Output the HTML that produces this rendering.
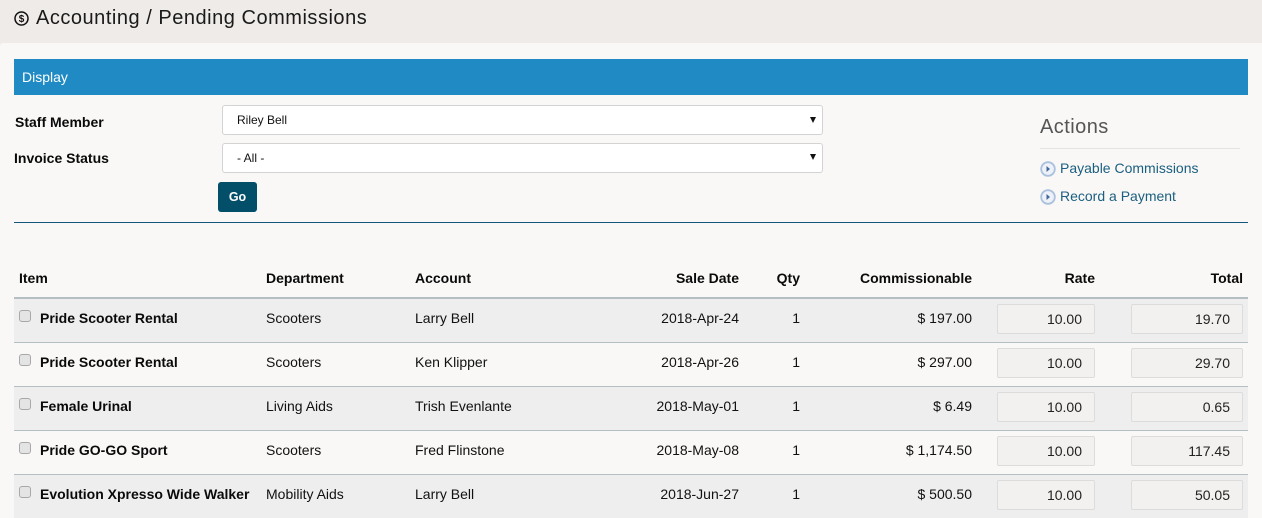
<!DOCTYPE html>
<html><head><meta charset="utf-8"><style>
html,body{margin:0;padding:0}
body{width:1262px;height:518px;overflow:hidden;position:relative;background:#eeebe8;font-family:"Liberation Sans",Arial,sans-serif;color:#111;font-size:14px}
.a,.r,.b,.l{position:absolute;white-space:nowrap;line-height:16px}
.r{text-align:right}
.b{font-weight:bold;color:#0a0a0a}
.row{position:absolute;left:14px;width:1234px;height:43px;border-bottom:1px solid #b4bfc2}
.g{background:#eeeeee}
.in{position:absolute;height:28px;border:1px solid #dcdcdc;border-radius:2px;background:#f2f1ef;text-align:right;line-height:29px;font-size:14px;color:#222;box-sizing:content-box}
.cb{position:absolute;left:19px;width:10px;height:10px;border:1px solid #a8a8a8;border-radius:3px;background:#e4e4e4}
.sel{position:absolute;left:222px;width:599px;height:28px;background:#fff;border:1px solid #d3d3d3;border-radius:3px;font-size:12px;line-height:29px;text-indent:14px}
.sel i{position:absolute;right:6px;width:0;height:0;border-left:3px solid transparent;border-right:3px solid transparent;border-top:6px solid #111}
.l{color:#1b5f80}
</style></head><body>
<div style="position:absolute;left:0;top:43px;width:1262px;height:475px;background:#f9f8f6;border-top-left-radius:3px"></div>
<svg style="position:absolute;left:14px;top:11px" width="15" height="15" viewBox="0 0 15 15"><circle cx="7.5" cy="7.5" r="6.5" fill="none" stroke="#111" stroke-width="1.5"/><text x="7.5" y="11" font-size="10" font-weight="bold" text-anchor="middle" font-family="Liberation Sans" fill="#111">$</text></svg>
<div class="a" style="left:36px;top:6px;font-size:20px;line-height:24px;letter-spacing:.52px;color:#1a1a1a">Accounting / Pending Commissions</div>

<div style="position:absolute;left:14px;top:59px;width:1234px;height:36px;background:#1f8ac3"></div>
<div class="a" style="left:22px;top:69px;color:#fff;font-size:14px">Display</div>

<div class="b" style="left:15px;top:114px">Staff Member</div>
<div class="b" style="left:14px;top:150px">Invoice Status</div>
<div class="sel" style="top:105px">Riley Bell<i style="top:11px"></i></div>
<div class="sel" style="top:143px">- All -<i style="top:10px"></i></div>
<div style="position:absolute;left:218px;top:182px;width:39px;height:30px;background:#034f6a;border-radius:3px;color:#fff;font-weight:bold;font-size:12.5px;text-align:center;line-height:30px">Go</div>

<div class="a" style="left:1040px;top:115px;font-size:20px;line-height:24px;letter-spacing:.45px;color:#555">Actions</div>
<div style="position:absolute;left:1040px;top:148px;width:200px;height:1px;background:#e6e4e2"></div>
<svg style="position:absolute;left:1040px;top:161px" width="16" height="16" viewBox="0 0 16 16"><circle cx="8" cy="8" r="6.8" fill="#eef2f8" stroke="#a9c0de" stroke-width="1.8"/><path d="M6.5 5l3.5 3-3.5 3z" fill="#41689c"/></svg>
<svg style="position:absolute;left:1040px;top:189px" width="16" height="16" viewBox="0 0 16 16"><circle cx="8" cy="8" r="6.8" fill="#eef2f8" stroke="#a9c0de" stroke-width="1.8"/><path d="M6.5 5l3.5 3-3.5 3z" fill="#41689c"/></svg>
<div class="l" style="left:1060px;top:160px">Payable Commissions</div>
<div class="l" style="left:1060px;top:188px">Record a Payment</div>
<div style="position:absolute;left:14px;top:222px;width:1234px;height:1px;background:#14587f"></div>

<div class="b" style="left:19px;top:270px">Item</div>
<div class="b" style="left:266px;top:270px">Department</div>
<div class="b" style="left:415px;top:270px">Account</div>
<div class="b r" style="right:523px;top:270px">Sale Date</div>
<div class="b r" style="right:462px;top:270px">Qty</div>
<div class="b r" style="right:290px;top:270px">Commissionable</div>
<div class="b r" style="right:167px;top:270px">Rate</div>
<div class="b r" style="right:19px;top:270px">Total</div>
<div style="position:absolute;left:14px;top:297px;width:1234px;height:2px;background:#b4bfc2"></div>

<div class="row g" style="top:299px"></div>
<div class="row" style="top:343px"></div>
<div class="row g" style="top:387px"></div>
<div class="row" style="top:431px"></div>
<div class="row g" style="top:475px;border:0"></div>

<div class="cb" style="top:310px"></div><div class="b" style="left:40px;top:310px">Pride Scooter Rental</div><div class="a" style="left:266px;top:310px">Scooters</div><div class="a" style="left:415px;top:310px">Larry Bell</div><div class="r" style="right:523px;top:310px">2018-Apr-24</div><div class="r" style="right:462px;top:310px">1</div><div class="r" style="right:290px;top:310px">$ 197.00</div><div class="in" style="left:997px;top:304px;width:84px;padding-right:12px">10.00</div><div class="in" style="left:1131px;top:304px;width:98px;padding-right:12px">19.70</div>

<div class="cb" style="top:354px"></div><div class="b" style="left:40px;top:354px">Pride Scooter Rental</div><div class="a" style="left:266px;top:354px">Scooters</div><div class="a" style="left:415px;top:354px">Ken Klipper</div><div class="r" style="right:523px;top:354px">2018-Apr-26</div><div class="r" style="right:462px;top:354px">1</div><div class="r" style="right:290px;top:354px">$ 297.00</div><div class="in" style="left:997px;top:348px;width:84px;padding-right:12px">10.00</div><div class="in" style="left:1131px;top:348px;width:98px;padding-right:12px">29.70</div>

<div class="cb" style="top:398px"></div><div class="b" style="left:40px;top:398px">Female Urinal</div><div class="a" style="left:266px;top:398px">Living Aids</div><div class="a" style="left:415px;top:398px">Trish Evenlante</div><div class="r" style="right:523px;top:398px">2018-May-01</div><div class="r" style="right:462px;top:398px">1</div><div class="r" style="right:290px;top:398px">$ 6.49</div><div class="in" style="left:997px;top:392px;width:84px;padding-right:12px">10.00</div><div class="in" style="left:1131px;top:392px;width:98px;padding-right:12px">0.65</div>

<div class="cb" style="top:442px"></div><div class="b" style="left:40px;top:442px">Pride GO-GO Sport</div><div class="a" style="left:266px;top:442px">Scooters</div><div class="a" style="left:415px;top:442px">Fred Flinstone</div><div class="r" style="right:523px;top:442px">2018-May-08</div><div class="r" style="right:462px;top:442px">1</div><div class="r" style="right:290px;top:442px">$ 1,174.50</div><div class="in" style="left:997px;top:436px;width:84px;padding-right:12px">10.00</div><div class="in" style="left:1131px;top:436px;width:98px;padding-right:12px">117.45</div>

<div class="cb" style="top:486px"></div><div class="b" style="left:40px;top:486px">Evolution Xpresso Wide Walker</div><div class="a" style="left:266px;top:486px">Mobility Aids</div><div class="a" style="left:415px;top:486px">Larry Bell</div><div class="r" style="right:523px;top:486px">2018-Jun-27</div><div class="r" style="right:462px;top:486px">1</div><div class="r" style="right:290px;top:486px">$ 500.50</div><div class="in" style="left:997px;top:480px;width:84px;padding-right:12px">10.00</div><div class="in" style="left:1131px;top:480px;width:98px;padding-right:12px">50.05</div>
</body></html>
